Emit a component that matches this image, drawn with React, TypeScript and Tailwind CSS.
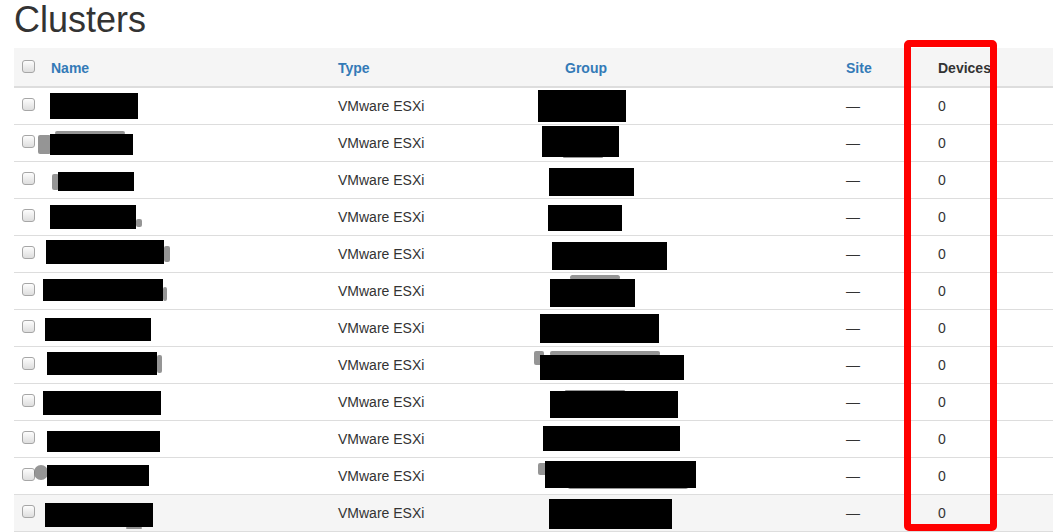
import React from "react";

type Rect = { x: number; y: number; w: number; h: number };
type Smudge = Rect & { round?: boolean };
type Row = { name: Rect; group: Rect; smudges?: Smudge[] };

const rows: Row[] = [
  { name: { x: 50, y: 5, w: 88, h: 26 }, group: { x: 538, y: 2, w: 88, h: 32 } },
  {
    name: { x: 50, y: 9, w: 83, h: 21 },
    group: { x: 542, y: 1, w: 77, h: 31 },
    smudges: [
      { x: 38, y: 10, w: 13, h: 19 },
      { x: 55, y: 6, w: 70, h: 4 },
      { x: 563, y: 31, w: 40, h: 2 },
    ],
  },
  {
    name: { x: 58, y: 10, w: 76, h: 19 },
    group: { x: 549, y: 6, w: 85, h: 28 },
    smudges: [{ x: 52, y: 12, w: 7, h: 16 }],
  },
  {
    name: { x: 50, y: 6, w: 86, h: 24 },
    group: { x: 548, y: 6, w: 74, h: 26 },
    smudges: [{ x: 136, y: 20, w: 6, h: 8 }],
  },
  {
    name: { x: 46, y: 4, w: 118, h: 24 },
    group: { x: 552, y: 6, w: 115, h: 28 },
    smudges: [{ x: 164, y: 10, w: 6, h: 16 }],
  },
  {
    name: { x: 43, y: 6, w: 120, h: 22 },
    group: { x: 550, y: 6, w: 85, h: 28 },
    smudges: [
      { x: 163, y: 14, w: 4, h: 14 },
      { x: 570, y: 2, w: 50, h: 5, round: true },
    ],
  },
  { name: { x: 45, y: 8, w: 106, h: 23 }, group: { x: 540, y: 4, w: 119, h: 29 } },
  {
    name: { x: 47, y: 5, w: 110, h: 23 },
    group: { x: 540, y: 8, w: 144, h: 25 },
    smudges: [
      { x: 157, y: 8, w: 5, h: 18 },
      { x: 534, y: 4, w: 10, h: 14 },
      { x: 550, y: 4, w: 110, h: 5 },
    ],
  },
  {
    name: { x: 43, y: 7, w: 118, h: 24 },
    group: { x: 550, y: 7, w: 128, h: 27 },
    smudges: [{ x: 565, y: 6, w: 60, h: 2 }],
  },
  { name: { x: 47, y: 10, w: 113, h: 21 }, group: { x: 543, y: 5, w: 137, h: 25 } },
  {
    name: { x: 47, y: 7, w: 102, h: 21 },
    group: { x: 545, y: 3, w: 151, h: 27 },
    smudges: [
      { x: 34, y: 7, w: 14, h: 15, round: true },
      { x: 538, y: 5, w: 10, h: 12 },
      { x: 568, y: 27, w: 120, h: 4, round: true },
    ],
  },
  {
    name: { x: 45, y: 8, w: 108, h: 24 },
    group: { x: 549, y: 4, w: 123, h: 30 },
    smudges: [{ x: 126, y: 32, w: 16, h: 2 }],
  },
];

function Checkbox() {
  return (
    <div className="w-[13px] h-[13px] rounded-[3px] border border-[#a6a6a6] bg-linear-to-b from-[#fdfdfd] to-[#dedede]" />
  );
}

export default function App() {
  return (
    <div
      className="relative w-[1053px] h-[532px] overflow-hidden bg-white text-[#333]"
      style={{ fontFamily: '"Liberation Sans", Arial, sans-serif' }}
    >
      <h1 className="pl-[14px] h-[40px] text-[36px] leading-[40px] font-normal text-[#333]">Clusters</h1>
      <div className="ml-[14px] mt-[8px] w-[1060px] text-[14px]">
        {/* header */}
        <div className="flex items-center h-[40px] pt-[2px] bg-[#f5f5f5] border-b-2 border-[#ddd] font-bold">
          <div className="w-[37px] pl-[8px] mb-[4px] flex items-center">
            <Checkbox />
          </div>
          <div className="w-[287px] text-[#337ab7]">Name</div>
          <div className="w-[227px] text-[#337ab7]">Type</div>
          <div className="w-[281px] text-[#337ab7]">Group</div>
          <div className="w-[92px] text-[#337ab7]">Site</div>
          <div className="flex-1 text-[#333]">Devices</div>
        </div>
        {rows.map((r, i) => (
          <div
            key={i}
            className={`relative flex items-center h-[37px] border-b border-[#ddd] ${
              i === rows.length - 1 ? "bg-[#f5f5f5]" : "bg-white"
            }`}
          >
            <div className="w-[37px] pl-[8px] mb-[4px] flex items-center">
              <Checkbox />
            </div>
            <div className="w-[287px] text-[#337ab7]">&nbsp;</div>
            <div className="w-[227px]">VMware ESXi</div>
            <div className="w-[281px]">&nbsp;</div>
            <div className="w-[92px]">—</div>
            <div className="flex-1">0</div>
            {r.smudges?.map((s, j) => (
              <div
                key={j}
                className={`absolute bg-[#7a7a7a] opacity-80 ${s.round ? "rounded-full" : "rounded-[2px]"}`}
                style={{ left: s.x - 14, top: s.y, width: s.w, height: s.h }}
              />
            ))}
            <div
              className="absolute bg-black"
              style={{ left: r.name.x - 14, top: r.name.y, width: r.name.w, height: r.name.h }}
            />
            <div
              className="absolute bg-black"
              style={{ left: r.group.x - 14, top: r.group.y, width: r.group.w, height: r.group.h }}
            />
          </div>
        ))}
      </div>
      <div className="absolute left-[904px] top-[40px] w-[93px] h-[491px] border-[7px] border-[#ff0000] rounded-[5px]" />
    </div>
  );
}
